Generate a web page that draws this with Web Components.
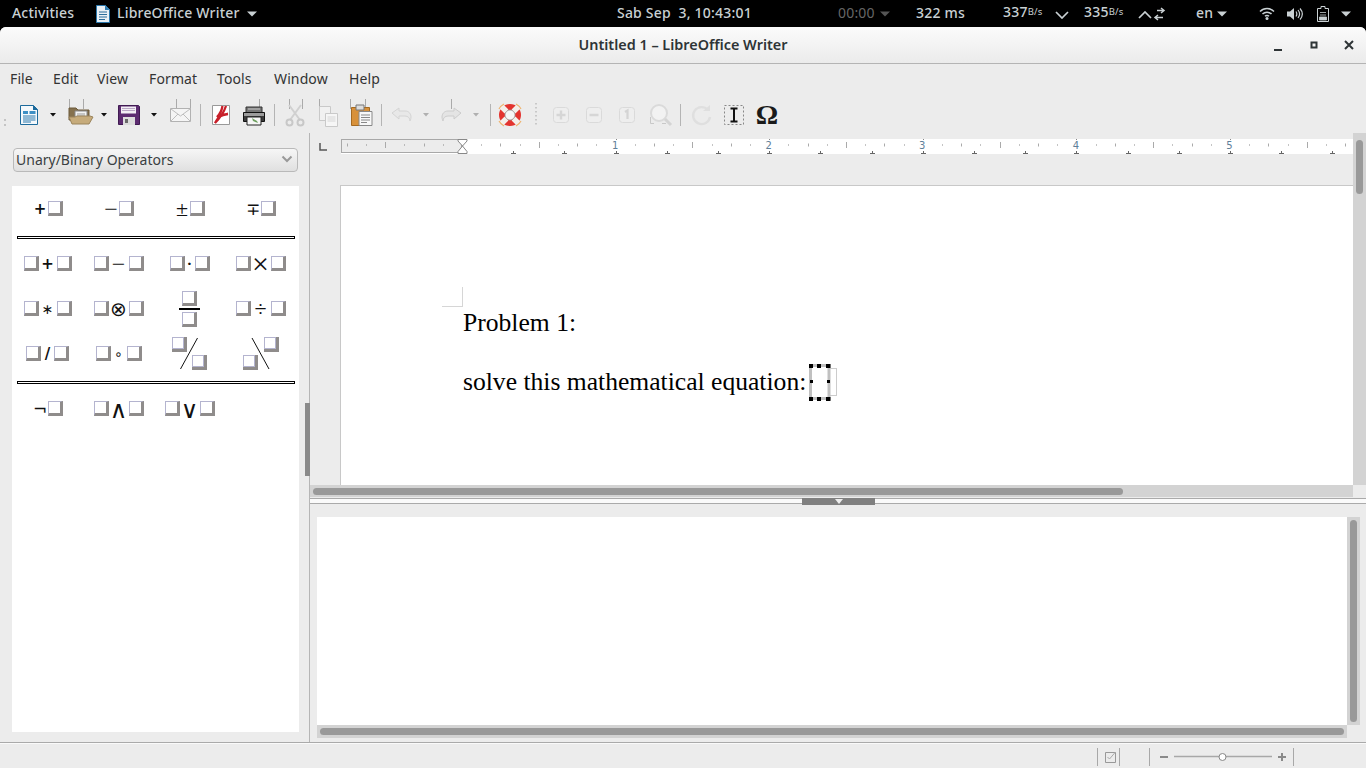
<!DOCTYPE html>
<html><head><meta charset="utf-8"><title>LibreOffice Writer</title>
<style>html,body{margin:0;padding:0;background:#000;overflow:hidden}</style></head>
<body>
<app-desktop>
<top-bar></top-bar>
<app-window>
<title-bar>Untitled 1 – LibreOffice Writer</title-bar>
<menu-bar><menu-item w="43">File</menu-item><menu-item w="44">Edit</menu-item><menu-item w="52">View</menu-item><menu-item w="68">Format</menu-item><menu-item w="57">Tools</menu-item><menu-item w="75">Window</menu-item><menu-item>Help</menu-item></menu-bar>
<tool-bar>
<tool-btn icon="doc" w="34"></tool-btn><tool-drop w="14"></tool-drop>
<tool-btn icon="folder" w="38"></tool-btn><tool-drop w="12"></tool-drop>
<tool-btn icon="save" w="38"></tool-btn><tool-drop w="12"></tool-drop>
<tool-btn icon="mail" w="40"></tool-btn><tool-sep></tool-sep>
<tool-btn icon="pdf" w="40"></tool-btn><tool-btn icon="print" w="26"></tool-btn><tool-sep m="7"></tool-sep>
<tool-btn icon="cut" w="40"></tool-btn><tool-btn icon="copy" w="26"></tool-btn><tool-btn icon="paste" w="40"></tool-btn><tool-sep></tool-sep>
<tool-btn icon="undo" w="38"></tool-btn><tool-drop w="12" off></tool-drop><tool-btn icon="redo" w="38"></tool-btn><tool-drop w="12" off></tool-drop><tool-sep m="8"></tool-sep>
<tool-btn icon="help" w="38"></tool-btn><tool-btn icon="dots" w="14"></tool-btn>
<tool-btn icon="plus" w="36"></tool-btn><tool-btn icon="minus" w="30"></tool-btn><tool-btn icon="one" w="36"></tool-btn><tool-btn icon="mag" w="30"></tool-btn><tool-sep m="5"></tool-sep>
<tool-btn icon="rot" w="40"></tool-btn><tool-btn icon="ibeam" w="26"></tool-btn><tool-btn icon="omega" w="40"></tool-btn>
</tool-bar>
<main-area>
<side-panel>
<combo-box slot="combo">Unary/Binary Operators</combo-box>
<math-row>
<math-cell><math-op w="15" k="plus">+</math-op><math-ph></math-ph></math-cell>
<math-cell><math-op w="16" k="minus">−</math-op><math-ph></math-ph></math-cell>
<math-cell><math-op w="16" k="pm">±</math-op><math-ph></math-ph></math-cell>
<math-cell><math-op w="16" k="dv">∓</math-op><math-ph></math-ph></math-cell></math-row>
<math-rule></math-rule>
<math-row>
<math-cell><math-ph></math-ph><math-op w="18" k="plus">+</math-op><math-ph></math-ph></math-cell>
<math-cell><math-ph></math-ph><math-op w="20" k="minus">−</math-op><math-ph></math-ph></math-cell>
<math-cell><math-ph></math-ph><math-op w="10" k="pm">·</math-op><math-ph></math-ph></math-cell>
<math-cell><math-ph></math-ph><math-op w="20" k="times">×</math-op><math-ph></math-ph></math-cell></math-row>
<math-row>
<math-cell><math-ph></math-ph><math-op w="18" k="ast">∗</math-op><math-ph></math-ph></math-cell>
<math-cell><math-ph></math-ph><math-op w="20" k="ot">⊗</math-op><math-ph></math-ph></math-cell>
<math-cell><math-frac></math-frac></math-cell>
<math-cell><math-ph></math-ph><math-op w="20" k="pm">÷</math-op><math-ph></math-ph></math-cell></math-row>
<math-row>
<math-cell><math-ph></math-ph><math-op w="13" k="slash">/</math-op><math-ph></math-ph></math-cell>
<math-cell><math-ph></math-ph><math-op w="16" k="ring">∘</math-op><math-ph></math-ph></math-cell>
<math-cell><math-slash></math-slash></math-cell>
<math-cell><math-slash back></math-slash></math-cell></math-row>
<math-rule></math-rule>
<math-row>
<math-cell><math-op w="15" k="dv">¬</math-op><math-ph></math-ph></math-cell>
<math-cell><math-ph></math-ph><math-op w="20" k="wedge">∧</math-op><math-ph></math-ph></math-cell>
<math-cell><math-ph></math-ph><math-op w="20" k="wedge">∨</math-op><math-ph></math-ph></math-cell>
<math-cell></math-cell></math-row>
</side-panel>
<doc-column>
<edit-view>
<doc-ruler slot="ruler"></doc-ruler>
<doc-page slot="page">
<doc-line>Problem 1:</doc-line>
<doc-line second>solve this mathematical equation:<math-frame></math-frame></doc-line>
</doc-page>
</edit-view>
<h-scroll thumb="810"></h-scroll>
<split-bar></split-bar>
<math-input></math-input>
</doc-column>
</main-area>
<status-bar></status-bar>
</app-window>
</app-desktop>
<script>
const def=(tag,css,html)=>customElements.define(tag,class extends HTMLElement{
  connectedCallback(){ if(this.shadowRoot) return;
    const s=this.attachShadow({mode:'open'});
    if(this.hasAttribute('w')) this.style.width=this.getAttribute('w')+'px';
    if(this.hasAttribute('m')) this.style.marginLeft=this.getAttribute('m')+'px';
    s.innerHTML=`<style>${css}</style>`+(typeof html==='function'?html(this):html);
  }});
const UI='"Noto Sans","Open Sans",sans-serif';
def('app-desktop',`:host{display:flex;flex-direction:column;width:1366px;height:768px;background:#000;overflow:hidden;font-family:${UI}}`,`<slot></slot>`);
const C='#c9d0d3';
const tri=(c)=>`<svg width="10" height="6" viewBox="0 0 10 6"><path d="M0 .5h10L5 5.500z" fill="${c}"/></svg>`;
def('top-bar',`:host{display:flex;align-items:center;height:27px;flex:none;color:${C};font-size:14px;font-weight:500;background:#000;letter-spacing:.2px}
 .a{display:flex;align-items:center;height:27px;padding-bottom:3px;box-sizing:border-box;white-space:nowrap}
 svg{display:block;flex:none}small{font-size:9.500px;font-weight:400}
 .up{position:relative;top:-1px}`,`
 <div class="a" style="margin-left:12px;width:84px">Activities</div>
 <svg width="14" height="18" viewBox="0 0 14 18" style="margin-right:7px"><path d="M.5.500h9l4 4v13H.5z" fill="#e8f0f6" stroke="#2a78ad"/><path d="M9 .5l4.500 4.500H9z" fill="#2a78ad"/><path d="M3 7h8M3 9.500h8M3 12h8M3 14.500h6" stroke="#2a6d9b"/></svg>
 <div class="a" style="width:130px">LibreOffice Writer</div>${tri(C)}
 <div class="a" style="margin-left:360px;width:221px">Sab Sep&nbsp; 3, 10:43:01</div>
 <div class="a" style="width:42px;color:#666;font-weight:400">00:00</div>${tri('#555')}
 <div class="a" style="margin-left:26px;width:87px">322 ms</div>
 <div class="a up" style="width:52px">337<small>B/s</small></div>
 <svg width="14" height="8" viewBox="0 0 14 8" style="margin:3px 15px 0 0"><path d="M1 1l6 6 6-6" fill="none" stroke="${C}" stroke-width="1.700"/></svg>
 <div class="a up" style="width:54px">335<small>B/s</small></div>
 <svg width="14" height="8" viewBox="0 0 14 8" style="margin:3px 0 0 0"><path d="M1 7l6-6 6 6" fill="none" stroke="${C}" stroke-width="1.700"/></svg>
 <svg width="16" height="14" viewBox="0 0 16 14"><path d="M9 1l3 2.500-3 2.500M12 3.500H5M6 8l-3 2.500L6 13M3 10.500h8" fill="none" stroke="${C}" stroke-width="1.500"/></svg>
 <div class="a" style="margin-left:28px;width:21px">en</div>${tri(C)}
 <svg width="16" height="13" viewBox="0 0 16 13" style="margin-left:32px"><path d="M1 4.500c4-4 10-4 14 0M3.500 7c2.500-2.500 6.500-2.500 9 0M6 9.300c1-1 3-1 4 0" fill="none" stroke="${C}" stroke-width="1.500"/><circle cx="8" cy="11.500" r="1.500" fill="${C}"/></svg>
 <svg width="16" height="14" viewBox="0 0 16 14" style="margin-left:12px"><path d="M0 4.500h3L7 1v12L3 9.500H0z" fill="${C}"/><path d="M9 4.500c1 1.500 1 3.500 0 5M11 3c2 2.500 2 5.500 0 8M13 1.500c3 3.500 3 7.500 0 11" fill="none" stroke="${C}" stroke-width="1.200"/></svg>
 <svg width="12" height="16" viewBox="0 0 12 16" style="margin-left:14px"><path d="M4 .5h4v2h3.500v13H.5v-13H4z" fill="none" stroke="${C}"/><path d="M3 6.500h6M3 9h6M2.500 11h7v3h-7z" fill="${C}" stroke="${C}" stroke-width=".8"/></svg>
 <span style="margin-left:12px">${tri(C)}</span>`);
def('app-window',`:host{display:flex;flex-direction:column;flex:1;min-height:0;background:#ececec;border-radius:6px 6px 0 0;overflow:hidden;color:#2e3436}`,`<slot></slot>`);
def('title-bar',`:host{display:flex;align-items:center;justify-content:center;flex:none;background:linear-gradient(#fbfbfb,#ebebeb);border-bottom:1px solid #b4b4b4;font-size:14.400px;font-weight:600;color:#2e3436;position:relative;padding-bottom:1px;box-sizing:border-box;height:37px}
 svg{position:absolute;top:0;right:0}`,`<slot></slot><svg width="100" height="36" viewBox="0 0 100 36"><path d="M8 22h8v2H8z" fill="#2e3436"/><path d="M45.500 15.500h5v5h-5z" fill="none" stroke="#2e3436" stroke-width="2"/><path d="M79 14l8 8M87 14l-8 8" stroke="#2e3436" stroke-width="2"/></svg>`);
def('menu-bar',`:host{display:flex;align-items:center;height:31px;flex:none;padding:0 0 2px 10px;box-sizing:border-box;background:#ececec;font-size:14px;letter-spacing:.12px;color:#333;position:relative}
 :host::before{content:"";position:absolute;left:0;bottom:-1px;width:10px;height:1px;background:#bbb}`,`<slot></slot>`);
def('menu-item',`:host{display:block;flex:none}`,`<slot></slot>`);
def('tool-bar',`:host{display:flex;align-items:center;height:38px;flex:none;padding-left:12px;position:relative;background:#ececec;box-sizing:border-box}
 :host::before{content:"";position:absolute;left:4px;top:24px;width:2px;height:2px;background:#c4c4c4;box-shadow:0 5px 0 #c4c4c4}`,`<slot></slot>`);
const art=(...xs)=>xs.map(x=>`<path d="M${x} 0v10" stroke="#aaa"/>`).join('');
const ICONS={
doc:`<path d="M7.500 6.500h13l4 4v15h-17z" fill="#f4f8fb" stroke="#1c6a9c"/><path d="M20 6l5 5h-5z" fill="#1c6a9c"/><path d="M10 12h5v3h-5zM16.500 12h6v3h-6z" fill="#3d8fc4"/><path d="M10 17h12.500M10 19h12.500M10 21h12.500M10 23h8" stroke="#2b78ad"/>`,
folder:art(6.5,20.5)+`<path d="M6 9h7l2 2h11v10H6z" fill="#85714e" stroke="#6d5a3b"/><path d="M12 12h12v10H12z" fill="#f3f3f3" stroke="#888"/><path d="M14 15h8M14 17h8M14 19h8" stroke="#999"/><path d="M6 18h6l2-1 13 0 3 1-4 7H9z" fill="#c6ab7b" stroke="#9b845c"/>`,
save:`<path d="M5.500 6.500h20l1 1v18h-21z" fill="#5c2b70" stroke="#401a52"/><path d="M8 7.500h15v7H8z" fill="#f2eef4"/><path d="M9 9.500h13M9 11.500h13" stroke="#b9a6c4"/><path d="M10 18h12v8H10z" fill="#dcdcdc"/><path d="M12 20h3v4h-3z" fill="#6a6a6a"/>`,
mail:art(12.5,26.5)+`<path d="M6.500 9.500h20v13h-20z" fill="#f5f5f5" stroke="#b2b2b2"/><path d="M7 10l9.500 7L26 10M7 22l7-7M26 22l-7-7" fill="none" stroke="#bdbdbd"/>`,
pdf:`<path d="M7.500 6.500h17v19h-17z" fill="#fff" stroke="#999"/><path d="M21 7c-2 6-5 11-11 17 3-6 5-8 13-9-5 .5-8 1.500-11 3 4-4 5-8 5.500-11" fill="none" stroke="#c8202a" stroke-width="2.300"/>`,
print:art(21.5)+`<path d="M8 8h16v6H8z" fill="#777" stroke="#333"/><path d="M10 10h12" stroke="#ccc"/><path d="M5.500 13.500h21v9h-21z" fill="#3b3b3b" stroke="#111"/><path d="M6 14h20v3H6z" fill="#9c9c9c"/><path d="M9 18h14v8H9z" fill="#f6f6f6" stroke="#222"/><path d="M14 19l5 3 1 2-5-2z" fill="#6fa060"/>`,
cut:art(10.5,23.5)+`<path d="M10 6l11 15M22 6L11 21" stroke="#d0d0d0" stroke-width="2"/><circle cx="10.500" cy="23.500" r="3" fill="none" stroke="#c8c8c8" stroke-width="2"/><circle cx="21.500" cy="23.500" r="3" fill="none" stroke="#c8c8c8" stroke-width="2"/>`,
copy:art(7.5)+`<path d="M7.500 7.500h11v14h-11z" fill="#f1f1f1" stroke="#c9c9c9"/><path d="M13.500 14.500h12v13h-12z" fill="#f6f6f6" stroke="#c9c9c9"/><path d="M15.500 18h8M15.500 20h8M15.500 22h8" stroke="#d6d6d6"/>`,
paste:art(5.5,20.5)+`<path d="M6.500 8.500h18v18h-18z" fill="#d8913a" stroke="#a56a22"/><path d="M11 6h8v5h-8z" fill="#ddd" stroke="#777"/><path d="M14 12.500h13v14H14z" fill="#f8f8f8" stroke="#888"/><path d="M16 16h9M16 18.500h9M16 21h9M16 23.500h6" stroke="#888"/>`,
undo:`<path d="M7 14l7-5v3h6c4 0 6 3 6 6 0 2-1 4-1 4 0-3-2-5-5-5h-6v3z" fill="#e8e8e8" stroke="#d4d4d4" stroke-linejoin="round"/>`,
redo:art(16.5)+`<path d="M26 14l-7-5v3h-6c-4 0-6 3-6 6 0 2 1 4 1 4 0-3 2-5 5-5h6v3z" fill="#e4e4e4" stroke="#cccccc" stroke-linejoin="round"/>`,
help:`<circle cx="16" cy="16" r="8" fill="none" stroke="#e3342f" stroke-width="6"/><path d="M7.500 7.500l5 5M24.500 7.500l-5 5M7.500 24.500l5-5M24.500 24.500l-5-5" stroke="#f4efea" stroke-width="5.500"/><path d="M5 10a12 12 0 0 1 5-5M22 5a12 12 0 0 1 5 5M27 22a12 12 0 0 1-5 5M10 27a12 12 0 0 1-5-5" fill="none" stroke="#eeb36e" stroke-width="1.200"/><circle cx="16" cy="16" r="5" fill="#f6f6f6" stroke="#999" stroke-width=".8"/>`,
dots:`<path d="M16 4v24" stroke="#bdbdbd" stroke-width="1.500" stroke-dasharray="1.500 2.500"/>`,
plus:`<rect x="8.500" y="8.500" width="15" height="15" rx="3" fill="#eee" stroke="#dadada"/><path d="M16 11.500v9M11.500 16h9" stroke="#d6d6d6" stroke-width="2.400"/>`,
minus:`<rect x="8.500" y="8.500" width="15" height="15" rx="3" fill="#eee" stroke="#dadada"/><path d="M11.500 16h9" stroke="#d6d6d6" stroke-width="2.400"/>`,
one:`<rect x="8.500" y="8.500" width="15" height="15" rx="3" fill="#eee" stroke="#dadada"/><path d="M14 13l2.500-1.500V20" fill="none" stroke="#d4d4d4" stroke-width="2.200"/>`,
mag:`<circle cx="15" cy="14" r="8" fill="#f2f2f2" stroke="#dadada" stroke-width="2"/><path d="M21 20l6 6" stroke="#d4d4d4" stroke-width="3"/><path d="M6.500 18v6.500H10M18 24.500h4" fill="none" stroke="#c8c8c8"/>`,
rot:`<path d="M23 11a8.500 8.500 0 1 0 2 7" fill="none" stroke="#dfdfdf" stroke-width="2.400"/><path d="M18 12h7V6z" fill="#dfdfdf"/>`,
ibeam:`<rect x="6.500" y="6.500" width="19" height="19" fill="none" stroke="#888" stroke-dasharray="2 2"/><path d="M12.500 9.500h7M16 9.500v13M12.500 22.500h7" fill="none" stroke="#111" stroke-width="2"/>`,
omega:`<text x="16" y="25" text-anchor="middle" font-family="Liberation Serif,serif" font-weight="700" font-size="28" fill="#1a1a1a">Ω</text>`
};
def('tool-btn',`:host{display:flex;flex:none;height:32px;justify-content:center;align-self:flex-start;margin-top:4px}svg{display:block;overflow:visible;flex:none}`,
 t=>`<svg width="32" height="32" viewBox="0 0 32 32">${ICONS[t.getAttribute('icon')]}</svg>`);
def('tool-drop',`:host{display:flex;flex:none;align-items:center;justify-content:center;height:32px;align-self:flex-start;margin-top:4px}`,
 t=>`<svg width="6" height="4" viewBox="0 0 6 4"><path d="M0 0h6L3 3.500z" fill="${t.hasAttribute('off')?'#b0b0b0':'#111'}"/></svg>`);
def('tool-sep',`:host{display:block;flex:none;width:1px;height:22px;background:#b4b4b4;align-self:flex-start;margin-top:9px}`,``);
def('main-area',`:host{display:flex;flex:1;min-height:0}`,`<slot></slot>`);
def('side-panel',`:host{display:flex;flex-direction:column;width:310px;flex:none;box-sizing:border-box;border-right:1px solid #b5b5b5;padding:15px 0 0 12px;position:relative}
 .p{background:#fff;width:287px;height:546px;margin-top:14px;box-sizing:border-box;display:flex;flex-direction:column}
 .c{margin:0 0 0 1px;width:285px}
 .h{position:absolute;right:-1px;top:270px;width:5px;height:73px;background:#8a8a8a}`,
 `<div class="c"><slot name="combo"></slot></div><div class="p"><slot></slot></div><div class="h"></div>`);
def('combo-box',`:host{display:flex;align-items:center;justify-content:space-between;height:24px;box-sizing:border-box;border:1px solid #b9b9b9;border-radius:4px;background:linear-gradient(#f6f6f6,#e0e0e0);font-size:14px;color:#3a3f42;padding:0 4px 2px 2px}`,
 `<slot></slot><svg width="12" height="8" viewBox="0 0 12 8"><path d="M1.500 1.500L6 6l4.500-4.500" fill="none" stroke="#999" stroke-width="2"/></svg>`);
def('math-row',`:host{display:grid;grid-template-columns:repeat(4,71px);height:45px;align-items:center}`,`<slot></slot>`);
def('math-cell',`:host{display:flex;align-items:center;justify-content:center;height:45px}`,`<slot></slot>`);
def('math-rule',`:host{display:block;height:1px;margin:5px 4px 2px 5px;border:1px solid #000;background:#fff}`,``);
def('math-ph',`:host{display:block;flex:none;box-sizing:border-box;width:15px;height:15px;background:#fff;border:1px solid #b4b4cf;border-right:3px solid #8f8c8b;border-bottom:3px solid #8f8c8b}`,``);
def('math-op',`:host{display:block;flex:none;font:17px/16px "DejaVu Sans",sans-serif;color:#111;text-align:center;height:16px;overflow:visible;white-space:nowrap}
 :host([k=plus]){font-weight:700;font-size:15px}
 :host([k=minus]){font-family:"Liberation Serif",serif;font-size:24px}
 :host([k=pm]){font-family:"Liberation Serif",serif;font-size:22px}
 :host([k=times]){font-family:"Liberation Serif",serif;font-size:30px}
 :host([k=ast]){font-size:14px}
 :host([k=ot]){font-size:20px}
 :host([k=wedge]){font-size:24px;line-height:18px}
 :host([k=slash]){font-weight:700;font-size:15px}
 :host([k=ring]){font-size:14px}`,`<slot></slot>`);
const ph=(x,y)=>`<rect x="${x}" y="${y}" width="15" height="15" fill="#8f8c8b"/><rect x="${x+.5}" y="${y+.5}" width="11" height="11" fill="#fff" stroke="#b4b4cf"/>`;
def('math-frac',`:host{display:flex;flex-direction:column;align-items:center;width:22px;gap:1px}.b{width:21px;height:2px;background:#000;margin:1px 0}`,`<math-ph></math-ph><div class="b"></div><math-ph></math-ph>`);
def('math-slash',`:host{display:block;margin-top:2px}svg{display:block}`,t=>t.hasAttribute('back')
 ?`<svg width="36" height="36" viewBox="0 0 36 36">${ph(21,0)}${ph(0,18)}<path d="M9 1l17 31" stroke="#111" fill="none"/></svg>`
 :`<svg width="36" height="36" viewBox="0 0 36 36">${ph(0,0)}${ph(20,18)}<path d="M25.500 1L8.500 32" stroke="#111" fill="none"/></svg>`);
def('doc-column',`:host{display:flex;flex-direction:column;flex:1;min-width:0}`,`<slot></slot>`);
def('edit-view',`:host{display:flex;height:352px;flex:none}
 .m{flex:1;min-width:0;display:flex;flex-direction:column;overflow:hidden}
 .r{display:flex;padding-top:6px;height:15px;flex:none;padding-left:9px}
 .r svg{flex:none;margin:4px 14px 0 0}
 .p{margin:31px 0 0 30px;flex:1;min-height:0;display:flex}
 .v{width:13px;background:#d3d3d3;flex:none;padding:7px 3px 0;box-sizing:border-box}
 .t{height:54px;background:#999;border-radius:4px}`,
 `<div class="m"><div class="r"><svg width="8" height="8" viewBox="0 0 8 8"><path d="M1 0v7h7" fill="none" stroke="#555" stroke-width="1.500"/></svg><slot name="ruler"></slot></div><div class="p"><slot name="page"></slot></div></div><div class="v"><div class="t"></div></div>`);
def('doc-ruler',`:host{display:block;width:1012px;height:15px;flex:none}svg{display:block;overflow:hidden}`,()=>{
 let o=`<rect width="1012" height="15" fill="#fff"/><rect x=".5" y=".5" width="120" height="13" fill="#ececec" stroke="#a8a8a8"/>`;
 const O=121,U=19.2;
 for(let i=-6;i<47;i++){const x=O+i*U,k=((i%8)+8)%8; if(x<2||x>1010)continue;
  if(k===0&&i!==0){const n=Math.abs(i/8);o+=`<text x="${x-.5}" y="10" text-anchor="middle" font-size="10" font-family="DejaVu Sans,sans-serif" fill="#5f7f99">${n}</text>`;o+=`<path d="M${Math.round(x)+.5} -1v2" stroke="#888"/>`}
  else if(k===4)o+=`<path d="M${Math.round(x)+.5} 3v6" stroke="#aaa"/>`;
  else if(k%2===0)o+=`<path d="M${Math.round(x)+.5} 4.500v3" stroke="#aaa"/>`;
  else o+=`<path d="M${Math.round(x)+.5} 5.500v1" stroke="#888"/>`;}
 for(let i=1;i<18;i++){const x=Math.round(O+i*51.2)+.5;if(x>1010)break;o+=`<path d="M${x} 12v3M${x-2.500} 14.500h5" stroke="#666" fill="none"/>`}
 o+=`<path d="M117 .5h9v1.500L121.500 7 126 12.500v2h-9v-2L121.500 7 117 2z" fill="#fff" stroke="#888"/>`;
 return `<svg width="1012" height="15" viewBox="0 0 1012 15">${o}</svg>`;});
def('doc-page',`:host{display:block;position:relative;flex:1;background:#fff;border:1px solid #c8c8c8;border-width:1px 0 0 1px;padding:122px 0 0 122px;box-sizing:border-box;height:300px;overflow:hidden;font-family:"Liberation Serif",serif;font-size:25.600px;color:#000}
 i{position:absolute;left:101px;top:101px;width:21px;height:20px;border:solid #d6d6d6;border-width:0 1px 1px 0;box-sizing:border-box}`,`<i></i><slot></slot>`);
def('doc-line',`:host{display:block;line-height:30px;height:30px;white-space:nowrap}:host([second]){margin-top:29px}`,`<slot></slot>`);
def('math-frame',`:host{display:inline-block;width:30px;height:37px;vertical-align:top;margin:-3px 0 0 3px}svg{display:block}`,
 `<svg width="30" height="37" viewBox="0 0 30 37"><rect x="20.500" y="4.500" width="7" height="27" fill="none" stroke="#ccc"/><rect x="1.500" y="1.500" width="18.500" height="33" fill="none" stroke="#c0c0c0" stroke-width="3"/>
 <path d="M0 0h4v4H0zM8 0h4v4H8zM17 0h4.500v4H17zM0 33h4v4H0zM8 33h4v4H8zM17 33h4.500v4H17zM1 16h3v3H1zM18 16h3v3h-3z" fill="#000"/></svg>`);
def('h-scroll',`:host{display:block;height:12px;flex:none;background:#d3d3d3;padding:3px 0 2px 3px;box-sizing:border-box;margin-right:13px}.t{height:7px;background:#999;border-radius:4px}`,
 t=>`<div class="t" style="width:${t.getAttribute('thumb')}px"></div>`);
def('split-bar',`:host{display:block;height:9px;flex:none;box-sizing:border-box;position:relative;background:#ececec}
 .l{position:absolute;left:0;right:0;top:1px;border:solid #aaa;border-width:1px 0;background:#fafafa;height:4px}
 .h{position:absolute;left:492px;top:1px;width:73px;height:7px;background:#808080}
 svg{position:absolute;left:33px;top:1px}`,`<div class="l"></div><div class="h"><svg width="8" height="6" viewBox="0 0 8 6"><path d="M0 0h8L4 5z" fill="#eee"/></svg></div>`);
def('math-input',`:host{display:flex;flex-direction:column;flex:1;min-height:0;padding:11px 6px 4px 7px;box-sizing:border-box}
 .a{display:flex;flex:1;min-height:0}.w{flex:1;background:#fff}
 .v{width:13px;background:#d3d3d3;padding:3px 3px;box-sizing:border-box;flex:none}.v div{height:100%;width:7px;background:#999;border-radius:4px}
 .h{height:13px;background:#d3d3d3;margin-right:13px;padding:3px;box-sizing:border-box;flex:none}.h div{height:7px;background:#999;border-radius:4px}`,
 `<div class="a"><div class="w"></div><div class="v"><div></div></div></div><div class="h"><div></div></div>`);
def('status-bar',`:host{display:flex;align-items:center;height:26px;flex:none;box-sizing:border-box;border-top:1px solid #aaa;box-shadow:inset 0 1px 0 #fafafa;background:#ececec;padding:2px 72px 0 0;justify-content:flex-end}
 i{display:block;width:1px;height:18px;background:#a8a8a8;flex:none}svg{display:block;flex:none}`,
 `<i></i><svg width="21" height="12" viewBox="0 0 21 12"><path d="M7.500 1.500h10v10h-10z" fill="none" stroke="#999"/><path d="M9.500 6l2 2 6-7" fill="none" stroke="#aaa"/></svg><i></i><span style="width:29px"></span><i></i>
 <svg width="143" height="12" viewBox="0 0 143 12"><path d="M10 5h8v2h-8zM128 5h8v2h-8zM131 2h2v8h-2z" fill="#8a8a8a"/><path d="M24 5.500h98" stroke="#a8a8a8" stroke-width="1.500"/><circle cx="72.500" cy="6" r="3.500" fill="#fff" stroke="#888"/></svg><i></i>`);
</script>
</body></html>
